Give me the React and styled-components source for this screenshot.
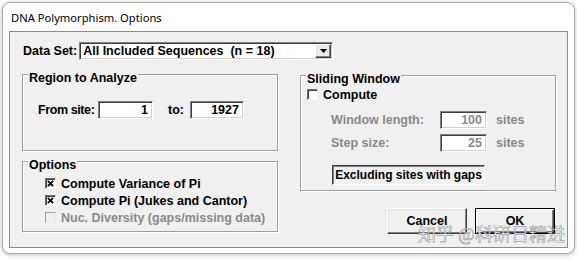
import React from 'react';
import styled, { createGlobalStyle, css } from 'styled-components';

const GlobalStyle = createGlobalStyle`
  html, body {
    margin: 0;
    padding: 0;
    background: #fff;
  }
  body {
    width: 577px;
    height: 259px;
    overflow: hidden;
  }
`;

const sunken = css`
  border: 1px solid;
  border-color: #808080 #fff #fff #808080;
  box-shadow: inset 1px 1px 0 #404040, inset -1px -1px 0 #d4d0c8;
`;

const raised = css`
  border: 1px solid;
  border-color: #fff #404040 #404040 #fff;
  box-shadow: inset -1px -1px 0 #808080, inset 1px 1px 0 #e3e3e3;
`;

const Window = styled.div`
  position: relative;
  box-sizing: border-box;
  width: 573px;
  height: 252px;
  margin: 2px 0 0 2px;
  border: 1px solid #a9a9a9;
  border-radius: 8px;
  background: #fff;
  box-shadow: 0 1px 4px rgba(0, 0, 0, 0.25);
  display: flex;
  flex-direction: column;
`;

const TitleBar = styled.div`
  height: 28px;
  display: flex;
  align-items: center;
  padding-left: 8px;
  font: 11.2px 'Noto Sans', sans-serif;
  color: #000;
`;

const Client = styled.div`
  box-sizing: border-box;
  height: 217px;
  margin: 0 6px;
  padding: 10px 0 0 12px;
  border: 1px solid #8c8c8c;
  background: #f0f0f0;
  font: bold 12.5px 'Liberation Sans', Arial, sans-serif;
  color: #000;
`;

const DataRow = styled.div`
  display: flex;
  align-items: center;
  height: 18px;
  padding-left: 1px;
`;

const Label = styled.span`
  flex: none;
  width: ${p => (p.$w ? `${p.$w}px` : 'auto')};
  margin-right: ${p => p.$gap || 0}px;
  margin-left: ${p => p.$lead || 0}px;
  letter-spacing: ${p => p.$tight || 0}px;
  color: ${p => (p.$disabled ? '#8a8a8a' : '#000')};
  white-space: pre;
`;

const Select = styled.div`
  ${sunken};
  box-sizing: border-box;
  width: 254px;
  height: 18px;
  display: flex;
  align-items: center;
  justify-content: space-between;
  padding-left: 3px;
  background: #fff;
  white-space: pre;
`;

const ArrowButton = styled.div`
  ${raised};
  box-sizing: border-box;
  width: 16px;
  height: 14px;
  margin-right: 1px;
  background: #ececec;
  display: flex;
  align-items: center;
  justify-content: center;
`;

const Body = styled.div`
  display: grid;
  grid-template-columns: 256px 256px;
  column-gap: 22px;
  margin-top: 14px;
`;

const Column = styled.div`
  display: flex;
  flex-direction: column;
  gap: ${p => p.$gap || 0}px;
`;

const GroupBox = styled.div`
  position: relative;
  box-sizing: border-box;
  height: ${p => p.$h}px;
  margin-top: ${p => p.$top || 0}px;
  border: 1px solid #a0a0a0;
  box-shadow: inset 1px 1px 0 #fff, 1px 1px 0 #fff;
`;

const Caption = styled.span`
  position: absolute;
  top: -3px;
  left: 5px;
  padding: 0 1px;
  line-height: 12px;
  background: #f0f0f0;
`;

const FieldRow = styled.div`
  display: flex;
  align-items: center;
  padding: 26px 0 0 15px;
`;

const Field = styled.div`
  ${sunken};
  flex: none;
  box-sizing: border-box;
  width: ${p => p.$w}px;
  height: 18px;
  padding-right: 4px;
  line-height: 16px;
  text-align: right;
  background: #fff;
  color: ${p => (p.$disabled ? '#8a8a8a' : '#000')};
`;

const CheckList = styled.div`
  display: flex;
  flex-direction: column;
  padding: ${p => p.$pad};
`;

const CheckRow = styled.div`
  display: flex;
  align-items: center;
  gap: 5px;
  height: 17px;
  color: ${p => (p.$disabled ? '#8a8a8a' : '#000')};
`;

const Box = styled.span`
  box-sizing: border-box;
  width: 11px;
  height: 11px;
  display: flex;
  align-items: center;
  justify-content: center;
  border: 1px solid;
  border-color: ${p => (p.$disabled ? '#a0a0a0 #e8e8e8 #e8e8e8 #a0a0a0' : '#707070 #fff #fff #707070')};
  box-shadow: ${p => (p.$disabled ? 'none' : 'inset 1px 1px 0 #404040')};
  background: ${p => (p.$disabled ? '#f0f0f0' : '#fff')};
`;

const ParamGrid = styled.div`
  display: grid;
  grid-template-columns: 100px 47px auto;
  column-gap: 9px;
  row-gap: 5px;
  align-items: center;
  margin: 8px 0 0 30px;
`;

const ToggleButton = styled.div`
  box-sizing: border-box;
  width: 153px;
  height: 20px;
  margin: 13px 0 0 31px;
  border: 1px solid;
  border-color: #404040 #fff #fff #404040;
  box-shadow: inset 1px 1px 0 #808080;
  display: flex;
  align-items: center;
  justify-content: center;
  font-size: 12px;
  white-space: nowrap;
`;

const ButtonRow = styled.div`
  display: flex;
  justify-content: flex-end;
  gap: 8px;
  margin-top: 17px;
  padding-right: 1px;
`;

const Button = styled.div`
  box-sizing: border-box;
  width: 80px;
  height: 26px;
  display: flex;
  align-items: center;
  justify-content: center;
  background: #f0f0f0;
  ${p =>
    p.$default
      ? css`
          border: 1px solid #000;
          box-shadow: inset 1px 1px 0 #fff, inset -1px -1px 0 #404040, inset -2px -2px 0 #808080;
        `
      : raised};
`;

const Watermark = styled.span`
  position: absolute;
  left: 415px;
  top: 221px;
  font: 18px 'Noto Sans CJK SC', sans-serif;
  line-height: 18px;
  color: rgba(255, 255, 255, 0.85);
  -webkit-text-stroke: 0.7px rgba(90, 90, 90, 0.55);
  white-space: pre;
  pointer-events: none;
`;

const Cross = () => (
  <svg width="7" height="7" viewBox="0 0 7 7">
    <path d="M0.8 0.8 L6.2 6.2 M6.2 0.8 L0.8 6.2" stroke="#000" strokeWidth="1.8" />
  </svg>
);

const Check = ({ checked, disabled, children }) => (
  <CheckRow $disabled={disabled}>
    <Box $disabled={disabled}>{checked && <Cross />}</Box>
    {children}
  </CheckRow>
);

export default function App() {
  return (
    <>
      <GlobalStyle />
      <Window>
        <TitleBar>DNA Polymorphism. Options</TitleBar>
        <Client>
          <DataRow>
            <Label $gap={2}>Data Set:</Label>
            <Select>
              <span>All Included Sequences  (n = 18)</span>
              <ArrowButton>
                <svg width="7" height="4" viewBox="0 0 7 4">
                  <path d="M0 0 H7 L3.5 4 Z" fill="#000" />
                </svg>
              </ArrowButton>
            </Select>
          </DataRow>
          <Body>
            <Column $gap={10}>
              <GroupBox $h={77}>
                <Caption>Region to Analyze</Caption>
                <FieldRow>
                  <Label $w={60} $tight={-0.4}>From site:</Label>
                  <Field $w={55}>1</Field>
                  <Label $lead={15} $gap={6}>to:</Label>
                  <Field $w={54}>1927</Field>
                </FieldRow>
              </GroupBox>
              <GroupBox $h={71}>
                <Caption>Options</Caption>
                <CheckList $pad="13px 0 0 22px">
                  <Check checked>Compute Variance of Pi</Check>
                  <Check checked>Compute Pi (Jukes and Cantor)</Check>
                  <Check disabled>Nuc. Diversity (gaps/missing data)</Check>
                </CheckList>
              </GroupBox>
            </Column>
            <Column>
              <GroupBox $h={116} $top={1}>
                <Caption>Sliding Window</Caption>
                <CheckList $pad="10px 0 0 6px">
                  <Check>Compute</Check>
                </CheckList>
                <ParamGrid>
                  <Label $disabled>Window length:</Label>
                  <Field $w={47} $disabled>100</Field>
                  <Label $disabled>sites</Label>
                  <Label $disabled>Step size:</Label>
                  <Field $w={47} $disabled>25</Field>
                  <Label $disabled>sites</Label>
                </ParamGrid>
                <ToggleButton>Excluding sites with gaps</ToggleButton>
              </GroupBox>
              <ButtonRow>
                <Button>Cancel</Button>
                <Button $default>OK</Button>
              </ButtonRow>
            </Column>
          </Body>
        </Client>
        <Watermark>知乎 @科研日精进</Watermark>
      </Window>
    </>
  );
}
